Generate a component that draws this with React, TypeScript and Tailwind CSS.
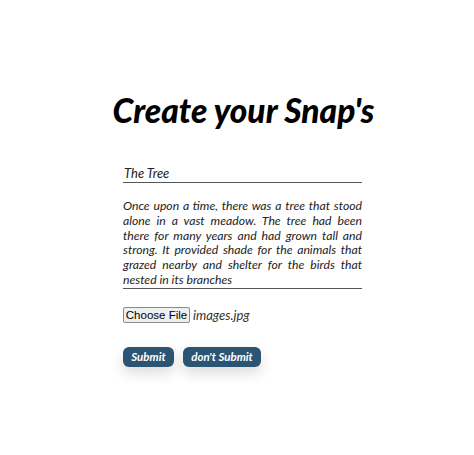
const body = [
  "Once upon a time, there was a tree that stood",
  "alone in a vast meadow. The tree had been",
  "there for many years and had grown tall and",
  "strong. It provided shade for the animals that",
  "grazed nearby and shelter for the birds that",
];

const serif = "font-['Lato','Noto_Sans',sans-serif] italic";

export default function App() {
  return (
    <div className={`min-h-[455px] w-[474px] bg-white ${serif} text-[#222]`}>
      <div className="flex flex-col pt-[86px]">
        <h1 className="pl-[13px] text-center text-[33.5px] leading-[48px] font-black text-black">Create your Snap's</h1>
        <form className="ml-[123px] mt-[31px] flex w-[239px] flex-col">
          <div className="border-b border-[#555] pl-px text-[13px] leading-[17px]">The Tree</div>
          <div className="mt-[16px] border-b border-[#555] text-[12.2px] leading-[14.8px]">
            {body.map((l) => (
              <div key={l} className="whitespace-nowrap [text-align-last:justify]">{l}</div>
            ))}
            <div>nested in its branches</div>
          </div>
          <div className="mt-[18px] flex items-center gap-[3px]">
            <button type="button" className="h-[16px] w-[67px] whitespace-nowrap rounded-[2px] border border-[#8a8a8a] bg-[#efefef] p-0 font-['Liberation_Sans',sans-serif] text-[11.5px] leading-[14px] not-italic text-black">
              Choose File
            </button>
            <span className="text-[13px] leading-[16px] text-[#333]">images.jpg</span>
          </div>
          <div className="mt-[24px] flex gap-[9px]">
            <button type="button" className="h-[20px] w-[51px] rounded-[6px] bg-[#2c5473] text-[11.5px] font-bold text-white shadow-[0_6px_14px_rgba(0,0,0,0.14)]">
              Submit
            </button>
            <button type="button" className="h-[20px] w-[78px] rounded-[6px] bg-[#2c5473] text-[11.5px] font-bold text-white shadow-[0_6px_14px_rgba(0,0,0,0.14)]">
              don't Submit
            </button>
          </div>
        </form>
      </div>
    </div>
  );
}
